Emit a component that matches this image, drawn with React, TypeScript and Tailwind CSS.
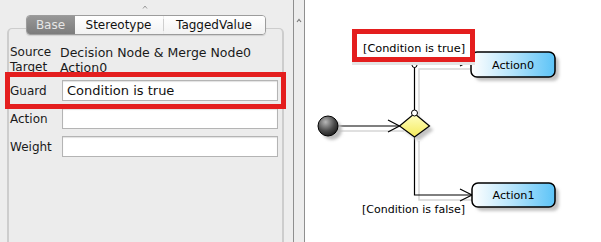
import React from "react";

const font = "font-['DejaVu_Sans',sans-serif]";

function Tabs() {
  return (
    <div className="relative z-10 ml-[7px] flex w-[277px] justify-center">
      <div className="flex h-[20px] overflow-hidden rounded-[4px] border border-[#9c9c9c] text-[12px] leading-[18px] shadow-[0_1px_1px_rgba(0,0,0,0.12)]">
        <div className="flex w-[48px] items-center justify-center bg-gradient-to-b from-[#979797] to-[#7c7c7c] text-[#e6e6e6]">
          Base
        </div>
        <div className="flex w-[88px] items-center justify-center bg-gradient-to-b from-white to-[#f2f2f2] text-[#111]">
          Stereotype
        </div>
        <div className="my-[3px] w-px bg-[#cfcfcf]" />
        <div className="flex w-[101px] items-center justify-center bg-gradient-to-b from-white to-[#f2f2f2] text-[#111]">
          TaggedValue
        </div>
      </div>
    </div>
  );
}

function Field({ label, value }: { label: string; value?: string }) {
  return (
    <div className="flex h-[21px] items-center">
      <span className="w-[52px] text-[12px] text-[#1a1a1a]">{label}</span>
      <div className="flex h-[21px] flex-1 items-center border border-[#b4b4b4] bg-white pl-[4px] text-[13px] text-[#111] shadow-[inset_0_1px_1px_rgba(0,0,0,0.12)]">
        {value}
      </div>
    </div>
  );
}

function PropertyPanel() {
  return (
    <div className="relative h-full w-[293px] shrink-0 bg-[#ededed]">
      <svg className="absolute left-[142px] top-[5px]" width="6" height="4" viewBox="0 0 6 4">
        <path d="M1 3.5 L3 1 L5 3.5" fill="none" stroke="#9a9a9a" strokeWidth="1" />
      </svg>
      <div className="flex flex-col pt-[15px]">
        <Tabs />
        <div className="-mt-[7px] ml-[7px] h-[230px] w-[277px] rounded-t-[5px] border-x-2 border-t border-[#cdcdcd] bg-[#ececec]">
          <div className="pl-[1px] pr-[4px] pt-[16px]">
            <div className="flex h-[15px] items-center leading-[15px]">
              <span className="w-[50px] text-[12px] text-[#1a1a1a]">Source</span>
              <span className="text-[12.5px] text-[#1a1a1a]">Decision Node &amp; Merge Node0</span>
            </div>
            <div className="flex h-[15px] items-center leading-[15px]">
              <span className="w-[50px] text-[12px] text-[#1a1a1a]">Target</span>
              <span className="text-[12.5px] text-[#1a1a1a]">Action0</span>
            </div>
            <div className="mt-[5px] flex flex-col gap-[7px]">
              <Field label="Guard" value="Condition is true" />
              <Field label="Action" />
              <Field label="Weight" />
            </div>
          </div>
        </div>
      </div>
      <div className="pointer-events-none absolute left-[5px] top-[72px] h-[37px] w-[281px] border-[5px] border-[#e41e1e]" />
    </div>
  );
}

function Diagram() {
  return (
    <svg className="h-full flex-1" viewBox="305 0 296 242" width="296" height="242">
      <defs>
        <linearGradient id="act" x1="0" y1="0" x2="1" y2="0">
          <stop offset="0" stopColor="#ffffff" />
          <stop offset="0.5" stopColor="#b3e3fb" />
          <stop offset="1" stopColor="#5cc3f7" />
        </linearGradient>
        <linearGradient id="dia" x1="0" y1="0" x2="0" y2="1">
          <stop offset="0" stopColor="#ffffc4" />
          <stop offset="1" stopColor="#f4ea5c" />
        </linearGradient>
        <radialGradient id="ini" cx="0.38" cy="0.3" r="0.75">
          <stop offset="0" stopColor="#b8b8b8" />
          <stop offset="0.6" stopColor="#4a4a4a" />
          <stop offset="1" stopColor="#1a1a1a" />
        </radialGradient>
        <filter id="blur" x="-20%" y="-20%" width="140%" height="140%">
          <feGaussianBlur stdDeviation="1.4" />
        </filter>
      </defs>

      {/* shadows of edges */}
      <g stroke="#d6d6d6" strokeWidth="1.5" fill="none">
        <path d="M333 131 H404" />
        <path d="M419 118 V69 H470" />
        <path d="M419 141 V200 H472" />
      </g>

      {/* edges */}
      <g stroke="#000" strokeWidth="1.2" fill="none">
        <path d="M338 126 H399.5" />
        <path d="M388 120 L399.5 126 L388 132" />
        <path d="M414.5 113 V60 H471" />
        <path d="M460 54 L471 60 L460 66" />
        <path d="M414.5 137 V195 H472" />
        <path d="M460 189 L472 195 L460 201" />
      </g>

      {/* initial node */}
      <circle cx="332" cy="130" r="10" fill="#bdbdbd" filter="url(#blur)" />
      <circle cx="328" cy="126" r="10" fill="url(#ini)" stroke="#000" strokeWidth="1" />

      {/* decision node */}
      <polygon points="403.5,130 418.5,117.5 433.5,130 418.5,141" fill="#c4c4c4" filter="url(#blur)" />
      <polygon points="399.5,126 414.5,113.5 429.5,126 414.5,137" fill="url(#dia)" stroke="#000" strokeWidth="1.2" />
      <circle cx="414.5" cy="113" r="3" fill="#fff" stroke="#000" strokeWidth="1" />
      <circle cx="414.5" cy="65" r="2.5" fill="#fff" stroke="#000" strokeWidth="1" />

      {/* actions */}
      <rect x="475" y="56" width="84" height="25" rx="6" fill="#c2c2c2" filter="url(#blur)" />
      <rect x="471" y="52" width="84" height="25" rx="6" fill="url(#act)" stroke="#000" strokeWidth="1.5" />
      <text x="513" y="68.5" textAnchor="middle" fontSize="11.2" fontFamily="DejaVu Sans, sans-serif" fill="#000">
        Action0
      </text>

      <rect x="476" y="187" width="83" height="24" rx="6" fill="#c2c2c2" filter="url(#blur)" />
      <rect x="472" y="183" width="83" height="24" rx="6" fill="url(#act)" stroke="#000" strokeWidth="1.5" />
      <text x="513.5" y="199" textAnchor="middle" fontSize="11.2" fontFamily="DejaVu Sans, sans-serif" fill="#000">
        Action1
      </text>

      {/* guard labels */}
      <rect x="352" y="62" width="123" height="3" fill="#e4e4e4" />
      <rect x="357" y="34" width="113" height="23" fill="#fff" />
      <text x="363" y="52" fontSize="11.3" fontFamily="DejaVu Sans, sans-serif" fill="#000">
        [Condition is true]
      </text>
      <text x="362" y="213" fontSize="11" fontFamily="DejaVu Sans, sans-serif" fill="#000">
        [Condition is false]
      </text>

      {/* annotation */}
      <rect x="354.5" y="31.5" width="118" height="28" fill="none" stroke="#e41e1e" strokeWidth="5" />
    </svg>
  );
}

export default function App() {
  return (
    <div className={`flex h-[242px] w-[601px] overflow-hidden bg-white ${font}`}>
      <PropertyPanel />
      <div className="w-px shrink-0 bg-[#8f8f8f]" />
      <div className="relative w-[10px] shrink-0 bg-[#ededed]">
        <svg className="absolute left-[2px] top-[18px]" width="6" height="5" viewBox="0 0 6 5">
          <path d="M1 4 L3 1.5 L5 4" fill="none" stroke="#7a7a7a" strokeWidth="1.2" />
        </svg>
      </div>
      <div className="w-px shrink-0 bg-[#8f8f8f]" />
      <Diagram />
    </div>
  );
}
